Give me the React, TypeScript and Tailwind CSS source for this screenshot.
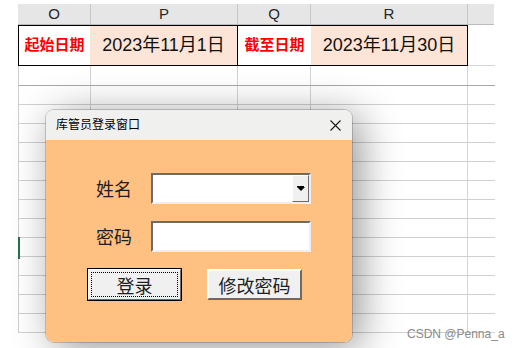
import React from "react";

const blankRows = Array.from({ length: 14 }, (_, i) => i);

const SheetHeader = () => (
  <div className="ml-[18px] mt-[4px] flex h-[21px] w-[476px] border-b border-[#bcbcbc] bg-[#e6e6e6] text-[15px] leading-[20px] text-[#262626]">
    <div className="w-[73px] border-r border-[#c8c8c8] text-center">O</div>
    <div className="w-[147px] border-r border-[#c8c8c8] text-center">P</div>
    <div className="w-[73px] border-r border-[#c8c8c8] text-center">Q</div>
    <div className="w-[157px] border-r border-[#c8c8c8] text-center">R</div>
    <div className="w-[26px]"></div>
  </div>
);

const DateRow = () => (
  <div className="ml-[18px] flex h-[41px]">
    <div className="flex h-[41px] w-[450px] border border-black">
      <div className="flex w-[71px] items-center justify-center bg-white text-[15px] font-bold text-[#ff0000]">
        起始日期
      </div>
      <div className="flex w-[148px] items-center justify-center border-r border-black bg-[#fce4d6] text-[18px] text-[#111]">
        2023年11月1日
      </div>
      <div className="flex w-[73px] items-center justify-center bg-white text-[15px] font-bold text-[#ff0000]">
        截至日期
      </div>
      <div className="flex w-[156px] items-center justify-center bg-[#fce4d6] text-[18px] text-[#111]">
        2023年11月30日
      </div>
    </div>
    <div className="h-[41px] w-[27px] border-b border-[#d4d4d4]"></div>
  </div>
);

const BlankRow = ({ first }: { first: boolean }) => (
  <div
    className={
      first
        ? "ml-[18px] flex h-[20px] w-[477px] border-b border-l border-b-[#a8a8a8] border-l-[#cfcfcf]"
        : "ml-[18px] flex h-[19px] w-[477px] border-b border-l border-b-[#d0d0d0] border-l-[#cfcfcf]"
    }
  >
    <div className="w-[72px] border-r border-[#d4d4d4]"></div>
    <div className="w-[147px] border-r border-[#d4d4d4]"></div>
    <div className="w-[73px] border-r border-[#d4d4d4]"></div>
    <div className="w-[157px] border-r border-[#d4d4d4]"></div>
    <div className="w-[27px]"></div>
  </div>
);

const Sunken = ({ children }: { children?: React.ReactNode }) => (
  <div className="flex h-[31px] w-[160px] border-2 border-t-[#6b6b6b] border-l-[#6b6b6b] border-r-[#eeeeee] border-b-[#eeeeee] bg-white">
    <div className="flex-1"></div>
    {children}
  </div>
);

const LoginDialog = () => (
  <div className="absolute left-[46px] top-[110px] flex h-[232px] w-[306px] flex-col overflow-hidden rounded-[8px] shadow-[0_0_0_1px_rgba(0,0,0,0.18),8px_6px_40px_rgba(0,0,0,0.42)]">
    <div className="flex h-[30px] items-center justify-between bg-[#f0f0ef] pl-[10px] pr-[10px]">
      <span className="text-[12px] text-black">库管员登录窗口</span>
      <svg width="11" height="11" viewBox="0 0 11 11" className="mr-[1px]">
        <path d="M0.5 0.5 L10.5 10.5 M10.5 0.5 L0.5 10.5" stroke="#1a1a1a" strokeWidth="1.1" />
      </svg>
    </div>
    <div className="flex flex-1 flex-col bg-[#ffc182] pl-[41px] pt-[33px] font-['Noto_Sans_CJK_SC',serif] text-[18px] text-[#1e1e1e]">
      <div className="flex items-center">
        <span className="ml-[9px] w-[55px]">姓名</span>
        <Sunken>
          <div className="flex w-[17px] items-center justify-center border border-t-white border-l-white border-r-[#6b6b6b] border-b-[#6b6b6b] bg-[#f0f0f0]">
            <div className="flex flex-col items-center">
              <div className="h-[1px] w-[7px] bg-black"></div>
              <div className="h-0 w-0 border-x-[4px] border-t-[4px] border-x-transparent border-t-black"></div>
            </div>
          </div>
        </Sunken>
      </div>
      <div className="mt-[17px] flex items-center">
        <span className="ml-[9px] w-[55px]">密码</span>
        <Sunken />
      </div>
      <div className="mt-[16px] flex items-start gap-[25px]">
        <div className="h-[33px] w-[95px] border border-black">
          <div className="flex h-full w-full items-center justify-center border border-t-white border-l-white border-r-[#6b6b6b] border-b-[#6b6b6b] bg-[#f0f0f0] p-[2px]">
            <div className="flex h-full w-full items-center justify-center border border-dotted border-black leading-none">
              登录
            </div>
          </div>
        </div>
        <div className="mt-[1px] flex h-[31px] w-[95px] items-center justify-center border-2 border-t-white border-l-white border-r-[#6b6b6b] border-b-[#6b6b6b] bg-[#f0f0f0] leading-none">
          修改密码
        </div>
      </div>
    </div>
  </div>
);

export default function App() {
  return (
    <div className="relative h-[348px] w-[519px] overflow-hidden bg-white font-['Liberation_Sans','Noto_Sans_CJK_SC',sans-serif]">
      <SheetHeader />
      <DateRow />
      {blankRows.map((i) => (
        <BlankRow key={i} first={i === 0} />
      ))}
      <div className="absolute left-[18px] top-[237px] h-[22px] w-[2px] bg-[#217346]"></div>
      <LoginDialog />
      <div className="absolute left-[407px] top-[325px] text-[12px] text-[#8a8a8a]">CSDN @Penna_a</div>
    </div>
  );
}
